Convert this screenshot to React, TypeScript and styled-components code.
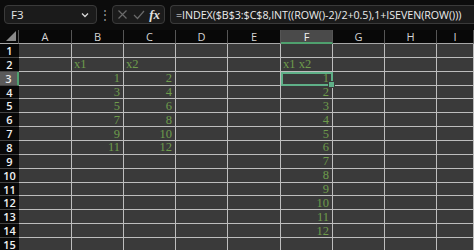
import styled, { createGlobalStyle, css } from "styled-components";

const GlobalStyle = createGlobalStyle`
  body {
    margin: 0;
    background: #0c0c0c;
    overflow: hidden;
  }
`;

const Page = styled.div`
  width: 474px;
  height: 250px;
  display: flex;
  flex-direction: column;
  background: #0c0c0c;
  font-family: "Open Sans", "Noto Sans", sans-serif;
  overflow: hidden;
`;

const Toolbar = styled.div`
  height: 30px;
  flex-shrink: 0;
  display: flex;
  align-items: flex-start;
  padding: 5px 0 0 4px;
  box-sizing: border-box;
`;

const Box = styled.div`
  height: 19px;
  box-sizing: border-box;
  border: 1px solid #3a3a3a;
  border-radius: 4px;
  background: #1b1b1b;
  display: flex;
  align-items: center;
`;

const NameBox = styled(Box)`
  width: 93px;
  padding: 0 6px;
  justify-content: space-between;
  color: #e8e8e8;
  font-size: 11.5px;
`;

const Dots = styled.div`
  width: 15px;
  height: 19px;
  display: flex;
  align-items: center;
  justify-content: center;
  color: #9a9a9a;
  font-size: 12px;
`;

const FuncBox = styled(Box)`
  width: 53px;
  padding: 0 4px;
  justify-content: space-between;
`;

const FxText = styled.span`
  font-family: "Liberation Serif", serif;
  font-style: italic;
  font-weight: bold;
  color: #e0e0e0;
  font-size: 13px;
`;

const FormulaBox = styled(Box)`
  flex: 1;
  margin-left: 5px;
  padding: 0 5px;
  color: #ececec;
  font-size: 10.7px;
  letter-spacing: -0.05px;
  white-space: nowrap;
  overflow: hidden;
  border-right: none;
  border-top-right-radius: 0;
  border-bottom-right-radius: 0;
`;

const Sheet = styled.div`
  display: grid;
  grid-template-columns: 19px 53px 52px 52px 52px 53px 52px 52px 52px 1fr;
  grid-template-rows: 14px repeat(15, 13.86px);
  background: #3a3a3a;
`;

const HeadCell = styled.div<{ $active?: boolean }>`
  background: #080808;
  color: #d4d4d4;
  font-size: 11px;
  display: flex;
  align-items: center;
  justify-content: center;
  box-sizing: border-box;
  border-right: 1px solid #555;
  border-bottom: 1px solid #a8a8a8;
  ${(p) =>
    p.$active &&
    css`
      background: #4a4a4a;
      color: #f2f2f2;
      border-bottom: 2px solid #4fa06e;
    `}
`;

const RowHead = styled.div<{ $active?: boolean }>`
  background: #080808;
  color: #f0f0f0;
  font-size: 11px;
  font-weight: 600;
  display: flex;
  align-items: center;
  justify-content: center;
  box-sizing: border-box;
  border-bottom: 1px solid #444;
  ${(p) =>
    p.$active &&
    css`
      background: #5a5a5a;
      color: #e8e8e8;
      border-right: 2px solid #4fa06e;
    `}
`;

const Corner = styled(HeadCell)`
  align-items: flex-end;
  justify-content: flex-end;
  padding: 0 2px 2px 0;
`;

const Cell = styled.div<{ $align?: string; $selected?: boolean }>`
  position: relative;
  box-sizing: border-box;
  border-right: 1px solid #bdbdbd;
  border-bottom: 1px solid #bdbdbd;
  background: #3a3a3a;
  color: #6e9c4c;
  font-family: "Liberation Serif", serif;
  font-size: 12.5px;
  line-height: 1;
  display: flex;
  align-items: flex-end;
  justify-content: ${(p) => (p.$align === "left" ? "flex-start" : "flex-end")};
  padding: 0 3px 0 2px;
  white-space: nowrap;
  ${(p) =>
    p.$selected &&
    css`
      outline: 2px solid #5fb088;
      outline-offset: -2px;
    `}
`;

const Handle = styled.span`
  position: absolute;
  right: -3px;
  bottom: -3px;
  width: 5px;
  height: 5px;
  background: #5fb088;
  border: 1px solid #3a3a3a;
  z-index: 1;
`;

const cols = ["A", "B", "C", "D", "E", "F", "G", "H", "I"];

const values: Record<string, string> = {
  B2: "x1",
  C2: "x2",
  F2: "x1 x2",
  B3: "1", C3: "2",
  B4: "3", C4: "4",
  B5: "5", C5: "6",
  B6: "7", C6: "8",
  B7: "9", C7: "10",
  B8: "11", C8: "12",
};
for (let i = 1; i <= 12; i++) values["F" + (i + 2)] = String(i);

const Chevron = () => (
  <svg width="10" height="10" viewBox="0 0 10 10">
    <path d="M2 3.5 L5 6.5 L8 3.5" fill="none" stroke="#d8d8d8" strokeWidth="1.3" />
  </svg>
);

const Cross = () => (
  <svg width="11" height="11" viewBox="0 0 11 11">
    <path d="M1.5 1.5 L9.5 9.5 M9.5 1.5 L1.5 9.5" stroke="#6a6a6a" strokeWidth="1.2" />
  </svg>
);

const Check = () => (
  <svg width="12" height="11" viewBox="0 0 12 11">
    <path d="M1 6 L4.5 9.5 L11 2" fill="none" stroke="#6a6a6a" strokeWidth="1.2" />
  </svg>
);

const SelectAll = () => (
  <svg width="10" height="10" viewBox="0 0 10 10">
    <path d="M10 0 L10 10 L0 10 Z" fill="#8a8a8a" />
  </svg>
);

const Row = ({ r }: { r: number }) => (
  <>
    <RowHead $active={r === 3}>{r}</RowHead>
    {cols.map((c) => {
      const v = values[c + r];
      const isText = v !== undefined && isNaN(Number(v));
      const sel = c === "F" && r === 3;
      return (
        <Cell key={c} $align={isText ? "left" : "right"} $selected={sel}>
          {v}
          {sel && <Handle />}
        </Cell>
      );
    })}
  </>
);

const App = () => {
  const rows = Array.from({ length: 15 }, (_, i) => i + 1);
  return (
    <Page>
      <GlobalStyle />
      <Toolbar>
        <NameBox>
          <span>F3</span>
          <Chevron />
        </NameBox>
        <Dots>⋮</Dots>
        <FuncBox>
          <Cross />
          <Check />
          <FxText>fx</FxText>
        </FuncBox>
        <FormulaBox>=INDEX($B$3:$C$8,INT((ROW()-2)/2+0.5),1+ISEVEN(ROW()))</FormulaBox>
      </Toolbar>
      <Sheet>
        <Corner>
          <SelectAll />
        </Corner>
        {cols.map((c) => (
          <HeadCell key={c} $active={c === "F"}>
            {c}
          </HeadCell>
        ))}
        {rows.map((r) => (
          <Row key={r} r={r} />
        ))}
      </Sheet>
    </Page>
  );
};

export default App;
